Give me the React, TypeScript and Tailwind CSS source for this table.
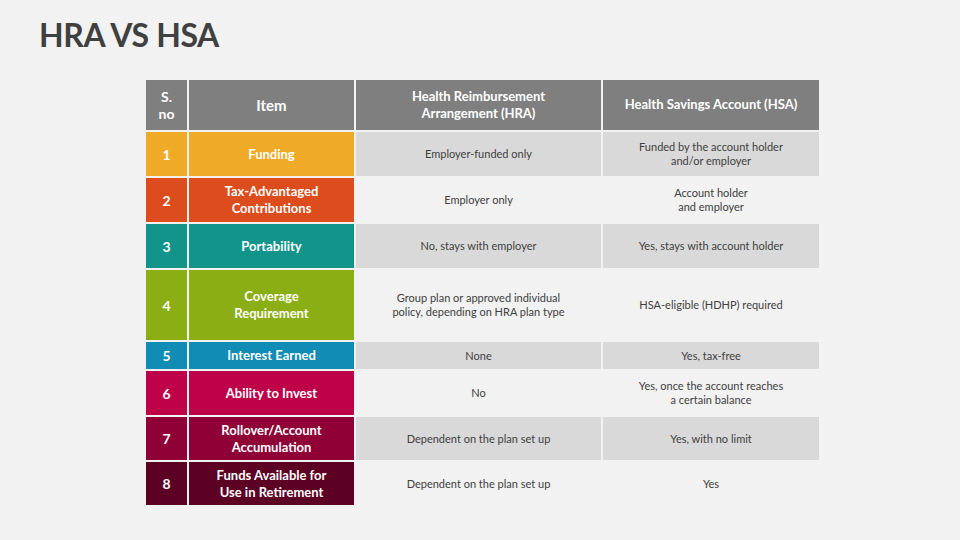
import React from "react";

type Row = {
  n: string;
  item: string[];
  hra: string[];
  hsa: string[];
  color: string;
  shade: boolean;
};

const rows: Row[] = [
  { n: "1", item: ["Funding"], hra: ["Employer-funded only"], hsa: ["Funded by the account holder", "and/or employer"], color: "bg-[#efab28]", shade: true },
  { n: "2", item: ["Tax-Advantaged", "Contributions"], hra: ["Employer only"], hsa: ["Account holder", "and employer"], color: "bg-[#dc4c1c]", shade: false },
  { n: "3", item: ["Portability"], hra: ["No, stays with employer"], hsa: ["Yes, stays with account holder"], color: "bg-[#13948a]", shade: true },
  { n: "4", item: ["Coverage", "Requirement"], hra: ["Group plan or approved individual", "policy, depending on HRA plan type"], hsa: ["HSA-eligible (HDHP) required"], color: "bg-[#8aae13]", shade: false },
  { n: "5", item: ["Interest Earned"], hra: ["None"], hsa: ["Yes, tax-free"], color: "bg-[#118cb4]", shade: true },
  { n: "6", item: ["Ability to Invest"], hra: ["No"], hsa: ["Yes, once the account reaches", "a certain balance"], color: "bg-[#be0048]", shade: false },
  { n: "7", item: ["Rollover/Account", "Accumulation"], hra: ["Dependent on the plan set up"], hsa: ["Yes, with no limit"], color: "bg-[#8f0036]", shade: true },
  { n: "8", item: ["Funds Available for", "Use in Retirement"], hra: ["Dependent on the plan set up"], hsa: ["Yes"], color: "bg-[#5c0024]", shade: false },
];

function Lines({ lines }: { lines: string[] }) {
  return (
    <>
      {lines.map((l, i) => (
        <span key={i} className="block">
          {l}
        </span>
      ))}
    </>
  );
}

export default function App() {
  return (
    <div
      className="w-[960px] h-[540px] bg-[#f2f2f2] overflow-hidden"
      style={{ fontFamily: "Lato, 'Open Sans', sans-serif" }}
    >
      <h1 className="pl-[39px] pt-[15px] text-[32px] leading-[40px] font-bold text-[#404040] tracking-[-0.4px]">
        HRA VS HSA
      </h1>
      <div className="ml-[146px] mt-[25px] grid grid-cols-[41px_165px_245px_216px] grid-rows-[50px_44px_44px_44px_70px_27px_44px_43px_43px] gap-x-[2px] gap-y-[2px]">
        <div className="bg-[#7f7f7f] text-white font-bold text-[14px] leading-[17px] flex items-center justify-center text-center">
          <span>
            S.
            <br />
            no
          </span>
        </div>
        <div className="bg-[#7f7f7f] text-white font-bold text-[15px] flex items-center justify-center">Item</div>
        <div className="bg-[#7f7f7f] text-white font-bold text-[13px] leading-[17px] flex items-center justify-center text-center">
          <span>
            Health Reimbursement
            <br />
            Arrangement (HRA)
          </span>
        </div>
        <div className="bg-[#7f7f7f] text-white font-bold text-[13px] flex items-center justify-center text-center">
          Health Savings Account (HSA)
        </div>
        {rows.map((r) => (
          <React.Fragment key={r.n}>
            <div className={`${r.color} text-white font-bold text-[14px] flex items-center justify-center`}>{r.n}</div>
            <div className={`${r.color} text-white font-bold text-[13px] leading-[17px] flex flex-col items-center justify-center text-center`}>
              <Lines lines={r.item} />
            </div>
            <div className={`${r.shade ? "bg-[#d9d9d9]" : ""} text-[#404040] text-[11px] leading-[14px] flex flex-col items-center justify-center text-center`}>
              <Lines lines={r.hra} />
            </div>
            <div className={`${r.shade ? "bg-[#d9d9d9]" : ""} text-[#404040] text-[11px] leading-[14px] flex flex-col items-center justify-center text-center`}>
              <Lines lines={r.hsa} />
            </div>
          </React.Fragment>
        ))}
      </div>
    </div>
  );
}
